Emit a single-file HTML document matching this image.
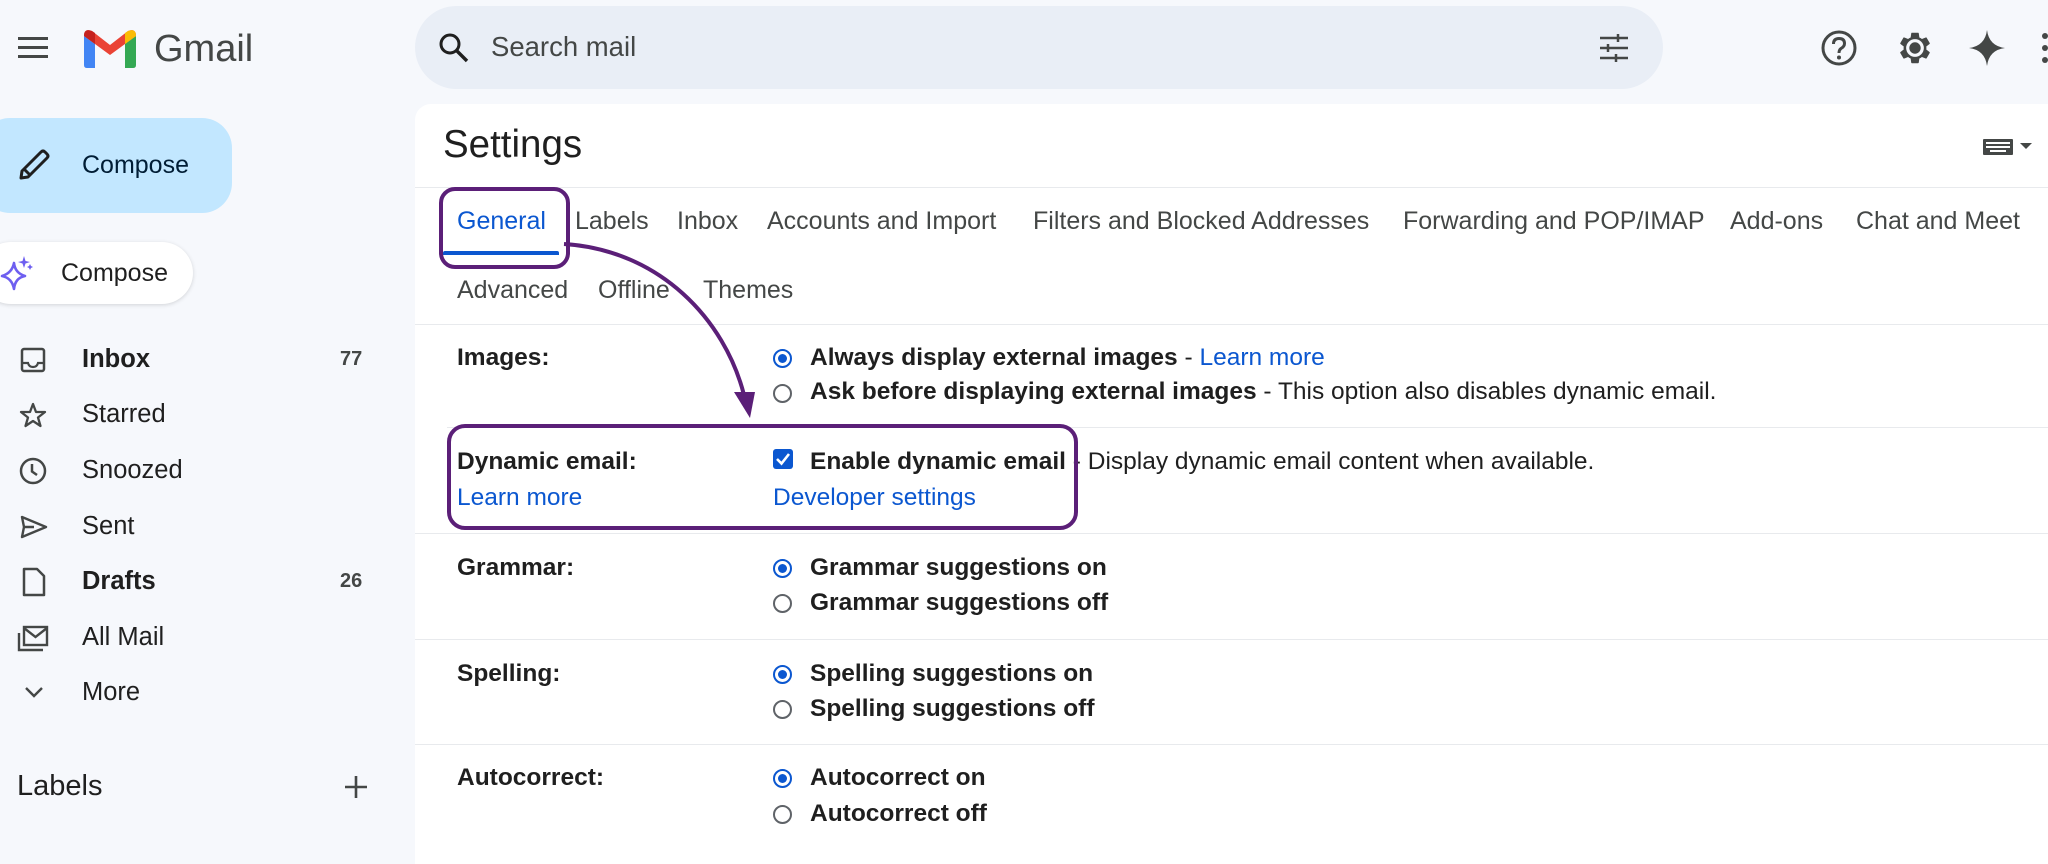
<!DOCTYPE html>
<html><head><meta charset="utf-8"><style>
*{margin:0;padding:0;box-sizing:border-box}
body{width:2048px;height:848px;background:#f6f8fc;font-family:"Liberation Sans",Arial,sans-serif;color:#1f1f1f;position:relative;overflow:hidden}
.a{position:absolute;white-space:nowrap;line-height:30px;height:30px}
.nav{font-size:25.5px;color:#1f1f1f}
.tab{font-size:25px;color:#444746}
.s{font-size:24.5px}
.b{font-weight:bold}
.lk{color:#0b57d0}
.hr{position:absolute;left:415px;right:0;height:1px;background:#e8eaed}
.radio{position:absolute;width:19px;height:19px;border:2px solid #5f6368;border-radius:50%}
.radio.on{border-color:#0b57d0}
.radio.on:after{content:"";position:absolute;left:3px;top:3px;width:9px;height:9px;border-radius:50%;background:#0b57d0}
svg{position:absolute}
</style></head><body>
<svg style="left:17px;top:34px" width="32" height="28" viewBox="0 0 32 28"><g fill="#444746"><rect x="1" y="3" width="30" height="3"/><rect x="1" y="12" width="30" height="3"/><rect x="1" y="21" width="30" height="3"/></g></svg>
<svg style="left:83px;top:28px" width="54" height="41" viewBox="0 0 54 41">
<path d="M1 8 L1 37 Q1 40 4 40 L12 40 L12 16 Z" fill="#4285f4"/>
<path d="M42 16 L42 40 L50 40 Q53 40 53 37 L53 8 Z" fill="#34a853"/>
<path d="M1 8 Q1 0 9 3 L27 17 L45 3 Q53 0 53 8 L42 16 L27 27 L12 16 Z" fill="#ea4335"/>
<path d="M42 5 L45 3 Q53 0 53 8 L42 16 Z" fill="#fbbc04"/>
<path d="M1 8 Q1 0 9 3 L12 5 L12 16 Z" fill="#c5221f"/>
</svg>
<div class="a" style="left:154px;top:28px;font-size:38px;line-height:42px;height:42px;color:#444746">Gmail</div>
<div style="position:absolute;left:415px;top:6px;width:1248px;height:83px;border-radius:42px;background:#e9eef6"></div>
<svg style="left:438px;top:32px" width="32" height="32" viewBox="0 0 32 32"><circle cx="12" cy="12" r="9" fill="none" stroke="#1f1f1f" stroke-width="3"/><path d="M19 19 L29 29" stroke="#1f1f1f" stroke-width="3.4"/></svg>
<div class="a" style="left:491px;top:32px;font-size:27.5px;color:#444746">Search mail</div>
<svg style="left:1598px;top:32px" width="32" height="32" viewBox="0 0 32 32"><path d="M2 6H30M2 16H30M2 26H30" stroke="#444746" stroke-width="2.5"/><path d="M20 2V10M10 12V20M18 22V30" stroke="#444746" stroke-width="2.5"/></svg>
<svg style="left:1820px;top:29px" width="38" height="38" viewBox="0 0 38 38"><circle cx="19" cy="19" r="16" fill="none" stroke="#444746" stroke-width="3"/><path d="M13.5 15 Q13.5 9.5 19 9.5 Q24.5 9.5 24.5 14.5 Q24.5 17.5 21 19.5 Q19 21 19 24" fill="none" stroke="#444746" stroke-width="3"/><circle cx="19" cy="28.5" r="2" fill="#444746"/></svg>
<svg style="left:1896px;top:29px" width="38" height="38" viewBox="0 0 24 24"><path fill="#444746" d="M19.14 12.94c.04-.3.06-.61.06-.94s-.02-.64-.07-.94l2.03-1.58a.49.49 0 0 0 .12-.61l-1.92-3.32a.49.49 0 0 0-.59-.22l-2.39.96c-.5-.38-1.030-.7-1.62-.94l-.36-2.54a.48.48 0 0 0-.48-.41h-3.84c-.24 0-.43.17-.47.41l-.36 2.54c-.59.24-1.13.57-1.62.94l-2.39-.96a.48.48 0 0 0-.59.22L2.74 8.87a.47.47 0 0 0 .12.61l2.03 1.58c-.05.3-.09.63-.09.94s.02.64.07.94l-2.03 1.58a.49.49 0 0 0-.12.61l1.92 3.32c.12.22.37.29.59.22l2.39-.96c.5.38 1.03.7 1.62.94l.36 2.54c.05.24.24.41.48.41h3.84c.24 0 .44-.17.47-.41l.36-2.54c.59-.24 1.13-.56 1.62-.94l2.39.96c.22.08.47 0 .59-.22l1.92-3.32c.12-.22.07-.47-.12-.61l-2.010-1.58zM12 17.6A5.6 5.6 0 1 1 12 6.4a5.6 5.6 0 0 1 0 11.2z"/><circle cx="12" cy="12" r="3.6" fill="#444746"/></svg>
<svg style="left:1968px;top:29px" width="38" height="38" viewBox="0 0 38 38"><path d="M19 1 Q21 17 37 19 Q21 21 19 37 Q17 21 1 19 Q17 17 19 1Z" fill="#444746"/></svg>
<svg style="left:2040px;top:32px" width="8" height="32" viewBox="0 0 8 32"><g fill="#444746"><circle cx="5" cy="4" r="3"/><circle cx="5" cy="16" r="3"/><circle cx="5" cy="28" r="3"/></g></svg>
<div style="position:absolute;left:-20px;top:118px;width:252px;height:95px;border-radius:30px;background:#c2e7ff"></div>
<svg style="left:17px;top:148px" width="34" height="34" viewBox="0 0 34 34"><path d="M4 30 L5 23 L24 4 Q26 2 28 4 L30 6 Q32 8 30 10 L11 29 Z M8 22 L12 26" fill="none" stroke="#1f1f1f" stroke-width="3" stroke-linejoin="round"/></svg>
<div class="a nav" style="left:82px;top:150px;font-size:25px;color:#001d35">Compose</div>
<div style="position:absolute;left:-20px;top:242px;width:213px;height:62px;border-radius:31px;background:#fff;box-shadow:0 1px 4px rgba(0,0,0,.15)"></div>
<svg style="left:0px;top:255px" width="34" height="36" viewBox="0 0 34 36"><path d="M14 8 Q15 18 25 21 Q15 23 14 34 Q12 23 2 21 Q12 18 14 8Z" fill="none" stroke="#6e5ff0" stroke-width="2.6" stroke-linejoin="round"/><path d="M24 1 L25.5 6 L30 7 L25.5 8.5 L24 13 L22.5 8.5 L18 7 L22.5 6Z" fill="#6e5ff0"/><path d="M30 9 L31 11 L33 12 L31 13 L30 15 L29 13 L27 12 L29 11Z" fill="#6e5ff0"/></svg>
<div class="a nav" style="left:61px;top:258px;font-size:25px">Compose</div>
<svg style="left:20px;top:347px" width="26" height="26" viewBox="0 0 26 26"><rect x="2" y="2" width="22" height="22" rx="2" fill="none" stroke="#444746" stroke-width="2.5"/><path d="M2 16 H8 Q9 20 13 20 Q17 20 18 16 H24" fill="none" stroke="#444746" stroke-width="2.2"/></svg>
<div class="a nav b" style="left:82px;top:344px">Inbox</div>
<div class="a" style="left:340px;top:344px;font-size:20px;color:#444746;font-weight:bold">77</div>
<svg style="left:19px;top:401px" width="28" height="28" viewBox="0 0 28 28"><path d="M14 3 L17 11 L26 11 L19 16.5 L21.5 25 L14 20 L6.5 25 L9 16.5 L2 11 L11 11Z" fill="none" stroke="#444746" stroke-width="2.3" stroke-linejoin="round"/></svg>
<div class="a nav" style="left:82px;top:399px">Starred</div>
<svg style="left:19px;top:457px" width="28" height="28" viewBox="0 0 28 28"><circle cx="14" cy="14" r="12" fill="none" stroke="#444746" stroke-width="2.5"/><path d="M13 7 V14.5 L18 18" fill="none" stroke="#444746" stroke-width="2.5"/></svg>
<div class="a nav" style="left:82px;top:455px">Snoozed</div>
<svg style="left:20px;top:515px" width="28" height="24" viewBox="0 0 28 24"><path d="M2 2 L26 12 L2 22 L4 12 Z M4 12 H14" fill="none" stroke="#444746" stroke-width="2.4" stroke-linejoin="round"/></svg>
<div class="a nav" style="left:82px;top:511px">Sent</div>
<svg style="left:22px;top:567px" width="24" height="30" viewBox="0 0 24 30"><path d="M2 2 H15 L22 9 V28 H2 Z" fill="none" stroke="#444746" stroke-width="2.5" stroke-linejoin="round"/></svg>
<div class="a nav b" style="left:82px;top:566px">Drafts</div>
<div class="a" style="left:340px;top:566px;font-size:20px;color:#444746;font-weight:bold">26</div>
<svg style="left:17px;top:625px" width="32" height="28" viewBox="0 0 32 28"><rect x="7" y="2" width="23" height="18" fill="none" stroke="#444746" stroke-width="2.4"/><path d="M7 3 L18.5 12 L30 3" fill="none" stroke="#444746" stroke-width="2.4"/><path d="M2 8 V25 H26" fill="none" stroke="#444746" stroke-width="2.4"/></svg>
<div class="a nav" style="left:82px;top:622px">All Mail</div>
<svg style="left:24px;top:686px" width="20" height="12" viewBox="0 0 20 12"><path d="M2 2 L10 10 L18 2" fill="none" stroke="#444746" stroke-width="2.4"/></svg>
<div class="a nav" style="left:82px;top:677px">More</div>
<div class="a" style="left:17px;top:769px;font-size:29px;line-height:34px;height:34px;color:#1f1f1f">Labels</div>
<svg style="left:344px;top:775px" width="24" height="24" viewBox="0 0 24 24"><path d="M12 1V23M1 12H23" stroke="#444746" stroke-width="2.6"/></svg>
<div style="position:absolute;left:415px;top:104px;width:1640px;height:760px;background:#fff;border-radius:16px 0 0 0"></div>
<div class="a" style="left:443px;top:123px;font-size:38.5px;line-height:44px;height:44px;color:#1f1f1f">Settings</div>
<svg style="left:1983px;top:138px" width="50" height="18" viewBox="0 0 50 18"><rect x="0" y="1" width="30" height="16" rx="1" fill="#444746"/><g fill="#fff"><rect x="3" y="4" width="24" height="2"/><rect x="3" y="8" width="24" height="2"/><rect x="7" y="12" width="16" height="2"/></g><path d="M37 5 L49 5 L43 11Z" fill="#444746"/></svg>
<div class="hr" style="top:187px"></div>
<div class="a tab" style="left:457px;top:206px;color:#0b57d0">General</div>
<div style="position:absolute;left:443px;top:251px;width:116px;height:4px;background:#0b57d0;border-radius:2px 2px 0 0"></div>
<div class="a tab" style="left:575px;top:206px">Labels</div>
<div class="a tab" style="left:677px;top:206px">Inbox</div>
<div class="a tab" style="left:767px;top:206px">Accounts and Import</div>
<div class="a tab" style="left:1033px;top:206px">Filters and Blocked Addresses</div>
<div class="a tab" style="left:1403px;top:206px">Forwarding and POP/IMAP</div>
<div class="a tab" style="left:1730px;top:206px">Add-ons</div>
<div class="a tab" style="left:1856px;top:206px">Chat and Meet</div>
<div class="a tab" style="left:457px;top:275px">Advanced</div>
<div class="a tab" style="left:598px;top:275px">Offline</div>
<div class="a tab" style="left:703px;top:275px">Themes</div>
<div class="hr" style="top:324px"></div>
<div class="a s b" style="left:457px;top:343px">Images:</div>
<div class="radio on" style="left:773px;top:349px"></div>
<div class="a s" style="left:810px;top:343px"><b>Always display external images</b> - <span class="lk">Learn more</span></div>
<div class="radio" style="left:773px;top:384px"></div>
<div class="a s" style="left:810px;top:377px"><b>Ask before displaying external images</b> - This option also disables dynamic email.</div>
<div class="hr" style="top:427px;left:447px"></div>
<div class="a s b" style="left:457px;top:447px">Dynamic email:</div>
<div class="a s lk" style="left:457px;top:483px">Learn more</div>
<div style="position:absolute;left:773px;top:449px;width:20px;height:20px;background:#0b57d0;border-radius:3px"></div>
<svg style="left:773px;top:449px" width="20" height="20" viewBox="0 0 20 20"><path d="M4 10 L8.5 14.5 L16 5" fill="none" stroke="#fff" stroke-width="2.6"/></svg>
<div class="a s" style="left:810px;top:447px"><b>Enable dynamic email</b> - Display dynamic email content when available.</div>
<div class="a s lk" style="left:773px;top:483px">Developer settings</div>
<div class="hr" style="top:533px"></div>
<div class="a s b" style="left:457px;top:553px">Grammar:</div>
<div class="radio on" style="left:773px;top:559px"></div>
<div class="a s b" style="left:810px;top:553px">Grammar suggestions on</div>
<div class="radio" style="left:773px;top:594px"></div>
<div class="a s b" style="left:810px;top:588px">Grammar suggestions off</div>
<div class="hr" style="top:639px"></div>
<div class="a s b" style="left:457px;top:659px">Spelling:</div>
<div class="radio on" style="left:773px;top:665px"></div>
<div class="a s b" style="left:810px;top:659px">Spelling suggestions on</div>
<div class="radio" style="left:773px;top:700px"></div>
<div class="a s b" style="left:810px;top:694px">Spelling suggestions off</div>
<div class="hr" style="top:744px"></div>
<div class="a s b" style="left:457px;top:763px">Autocorrect:</div>
<div class="radio on" style="left:773px;top:769px"></div>
<div class="a s b" style="left:810px;top:763px">Autocorrect on</div>
<div class="radio" style="left:773px;top:805px"></div>
<div class="a s b" style="left:810px;top:799px">Autocorrect off</div>
<div style="position:absolute;left:439px;top:187px;width:131px;height:82px;border:4px solid #5b1f78;border-radius:16px"></div>
<div style="position:absolute;left:447px;top:424px;width:631px;height:106px;border:4px solid #5b1f78;border-radius:18px"></div>
<svg style="left:0;top:0" width="2048" height="848" viewBox="0 0 2048 848"><path d="M564 244 C660 250 725 320 744 395" fill="none" stroke="#5b1f78" stroke-width="4"/><path d="M734 392 L755 392 L750 418 Z" fill="#5b1f78"/></svg>
</body></html>
